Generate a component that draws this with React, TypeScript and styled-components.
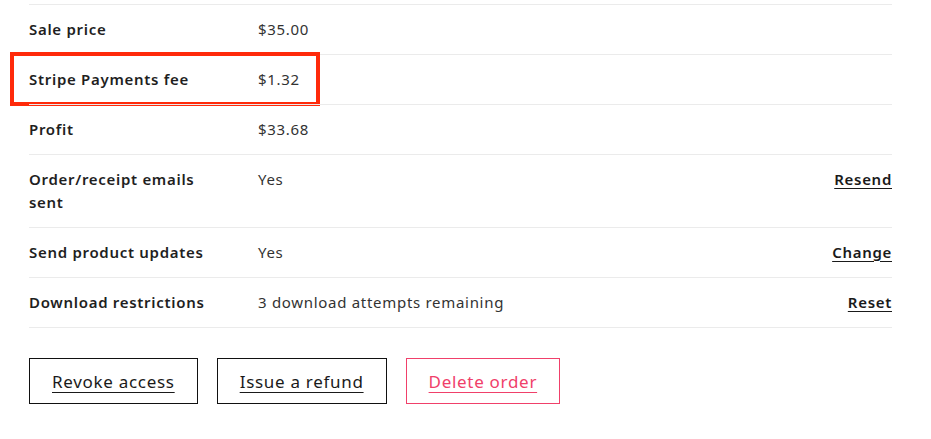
import React from "react";
import styled, { createGlobalStyle } from "styled-components";

const GlobalStyle = createGlobalStyle`
  body {
    margin: 0;
    background: #ffffff;
    font-family: "Noto Sans", "Open Sans", Arial, sans-serif;
    color: #1f1f1f;
    letter-spacing: 0.7px;
  }
`;

const Page = styled.div`
  padding: 4px 39px 0 29px;
  width: 863px;
`;

const Table = styled.div`
  display: flex;
  flex-direction: column;
  border-bottom: 1px solid #ebebeb;
`;

const Row = styled.div`
  position: relative;
  display: flex;
  align-items: flex-start;
  border-top: 1px solid #ebebeb;
  padding: 13px 0;
  font-size: 15px;
  line-height: 23px;
`;

const Label = styled.div`
  width: 229px;
  flex-shrink: 0;
  padding-right: 32px;
  box-sizing: border-box;
  font-weight: 600;
  color: #1f1f1f;
`;

const Value = styled.div`
  flex: 1;
  color: #333333;
`;

const RowAction = styled.a`
  font-weight: 600;
  color: #1a1a1a;
  text-decoration: underline;
  text-underline-offset: 3px;
  cursor: pointer;
`;

const Highlight = styled.span`
  position: absolute;
  left: -19px;
  top: -3px;
  width: 310px;
  height: 54px;
  box-sizing: border-box;
  border: 4px solid #ff2a0a;
  pointer-events: none;
`;

const Actions = styled.div`
  display: flex;
  gap: 19px;
  margin-top: 30px;
`;

const ActionButton = styled.button<{ $danger?: boolean }>`
  height: 46px;
  padding: 0 22px;
  background: #ffffff;
  border: 1px solid ${(p) => (p.$danger ? "#f0406a" : "#111111")};
  color: ${(p) => (p.$danger ? "#f0406a" : "#1a1a1a")};
  font-family: inherit;
  letter-spacing: 0.7px;
  font-size: 17px;
  font-weight: 400;
  text-decoration: underline;
  text-underline-offset: 4px;
  cursor: pointer;
`;

interface DetailRow {
  label: string;
  value: string;
  action?: string;
  highlighted?: boolean;
}

const rows: DetailRow[] = [
  { label: "Sale price", value: "$35.00" },
  { label: "Stripe Payments fee", value: "$1.32", highlighted: true },
  { label: "Profit", value: "$33.68" },
  { label: "Order/receipt emails sent", value: "Yes", action: "Resend" },
  { label: "Send product updates", value: "Yes", action: "Change" },
  {
    label: "Download restrictions",
    value: "3 download attempts remaining",
    action: "Reset",
  },
];

const App = () => {
  return (
    <Page>
      <GlobalStyle />
      <Table>
        {rows.map((row) => (
          <Row key={row.label}>
            <Label>{row.label}</Label>
            <Value>{row.value}</Value>
            {row.action && <RowAction>{row.action}</RowAction>}
            {row.highlighted && <Highlight />}
          </Row>
        ))}
      </Table>
      <Actions>
        <ActionButton>Revoke access</ActionButton>
        <ActionButton>Issue a refund</ActionButton>
        <ActionButton $danger>Delete order</ActionButton>
      </Actions>
    </Page>
  );
};

export default App;
